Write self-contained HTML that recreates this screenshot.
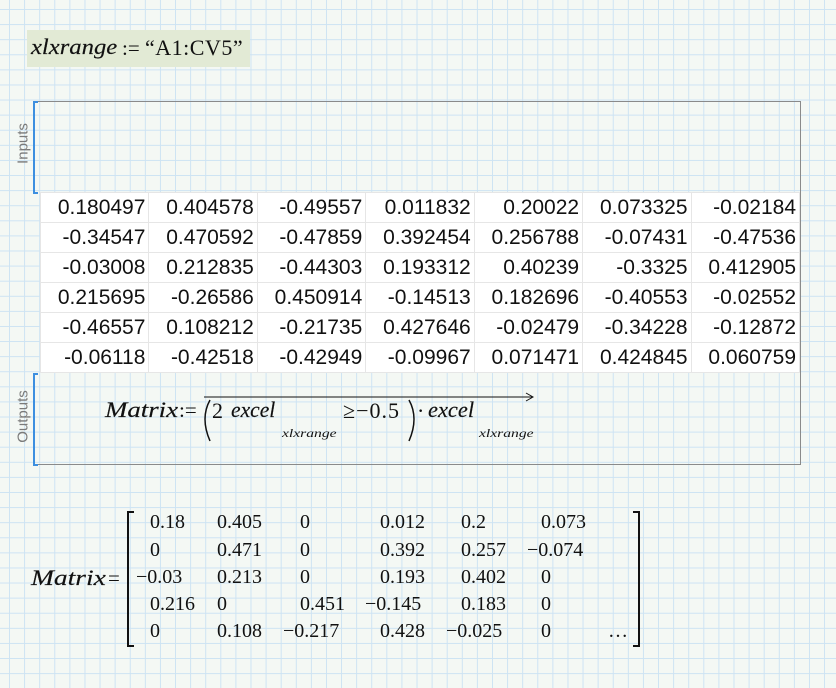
<!DOCTYPE html>
<html><head><meta charset="utf-8"><style>
html,body{margin:0;padding:0}
body{width:836px;height:688px;position:relative;overflow:hidden;background-color:#f4f8f4;
background-image:linear-gradient(to right,#cde3f3 1px,transparent 1px),linear-gradient(to bottom,#cde3f3 1px,transparent 1px);
background-size:15.1px 15.1px;background-position:9px 9px;font-family:"Liberation Serif",serif}
.a{position:absolute;white-space:nowrap}
.m{font-family:"Liberation Serif",serif;font-size:20px;color:#111}
.i{font-style:italic;font-size:22px;display:inline-block;transform-origin:left center;-webkit-text-stroke:0.15px #111}
table{position:absolute;left:40px;top:192px;width:760px;table-layout:fixed;border-collapse:collapse;background:#fff;font-family:"Liberation Sans",sans-serif;font-size:21px;color:#111}
td{height:29px;padding:0 3px 0 0;text-align:right;border:1px solid #e6e6e6;line-height:29px;overflow:hidden}
.lab{position:absolute;font-family:"Liberation Sans",sans-serif;font-size:15px;color:#7a7a7a;transform:rotate(-90deg);transform-origin:center}
.s{font-size:12px;font-style:italic;display:inline-block;transform:scaleX(1.3);transform-origin:left center}
</style></head><body>
<div class="a" style="left:27px;top:30px;width:223px;height:37px;background:#e2ead5"></div>
<div class="a m" style="left:31px;top:34px"><span class="i" style="transform:scaleX(1.12)">xlxrange</span></div>
<div class="a m" style="left:122px;top:36px;font-size:21px">:=</div>
<div class="a m" style="left:145px;top:35px;font-size:22px;letter-spacing:0.5px">“A1:CV5”</div>

<div class="a" style="left:36px;top:101px;width:764px;height:362px;border-top:1px solid #8a8a8a;border-right:1px solid #8a8a8a;border-bottom:1px solid #8a8a8a"></div>
<div class="a" style="left:33px;top:101px;width:3px;height:89px;border:2px solid #3d8fe0;border-right:none"></div>
<div class="a" style="left:33px;top:373px;width:3px;height:89px;border:2px solid #3d8fe0;border-right:none"></div>
<div class="lab" style="left:-2px;top:135px;width:50px;text-align:center">Inputs</div>
<div class="lab" style="left:-7px;top:408px;width:60px;text-align:center">Outputs</div>

<table>
<tr><td>0.180497</td><td>0.404578</td><td>-0.49557</td><td>0.011832</td><td>0.20022</td><td>0.073325</td><td>-0.02184</td></tr>
<tr><td>-0.34547</td><td>0.470592</td><td>-0.47859</td><td>0.392454</td><td>0.256788</td><td>-0.07431</td><td>-0.47536</td></tr>
<tr><td>-0.03008</td><td>0.212835</td><td>-0.44303</td><td>0.193312</td><td>0.40239</td><td>-0.3325</td><td>0.412905</td></tr>
<tr><td>0.215695</td><td>-0.26586</td><td>0.450914</td><td>-0.14513</td><td>0.182696</td><td>-0.40553</td><td>-0.02552</td></tr>
<tr><td>-0.46557</td><td>0.108212</td><td>-0.21735</td><td>0.427646</td><td>-0.02479</td><td>-0.34228</td><td>-0.12872</td></tr>
<tr><td>-0.06118</td><td>-0.42518</td><td>-0.42949</td><td>-0.09967</td><td>0.071471</td><td>0.424845</td><td>0.060759</td></tr>
</table>

<div class="a m" style="left:105px;top:397px"><span class="i" style="transform:scaleX(1.22)">Matrix</span></div>
<div class="a m" style="left:179px;top:398px;font-size:21px">:=</div>
<svg class="a" style="left:195px;top:388px" width="345" height="58">
<line x1="9" y1="9" x2="337" y2="9" stroke="#111" stroke-width="1"/>
<path d="M331 5 L338 9 L331 13" fill="none" stroke="#111" stroke-width="1"/>
<path d="M15 12 Q5 30 15 53" fill="none" stroke="#111" stroke-width="1.5"/>
<path d="M214 12 Q224 30 214 53" fill="none" stroke="#111" stroke-width="1.5"/>
</svg>
<div class="a m" style="left:212px;top:398px;font-size:22px">2</div>
<div class="a m" style="left:231px;top:397px"><span class="i" style="transform:scaleX(0.98)">excel</span></div>
<div class="a m" style="left:282px;top:420px"><span class="s">xlxrange</span></div>
<div class="a m" style="left:343px;top:398px;font-size:22px;letter-spacing:1px">≥−0.5</div>
<div class="a m" style="left:417px;top:398px;font-size:22px">·</div>
<div class="a m" style="left:428px;top:397px"><span class="i" style="transform:scaleX(1.02)">excel</span></div>
<div class="a m" style="left:479px;top:420px"><span class="s">xlxrange</span></div>

<div class="a m" style="left:31px;top:565px"><span class="i" style="transform:scaleX(1.25)">Matrix</span></div>
<div class="a m" style="left:108px;top:566px;font-size:21px">=</div>
<svg class="a" style="left:120px;top:510px" width="530" height="140">
<path d="M14 2 L8 2 L8 136 L14 136" fill="none" stroke="#111" stroke-width="2"/>
<path d="M513 2 L519 2 L519 136 L513 136" fill="none" stroke="#111" stroke-width="2"/>
</svg>
<div class="a m" style="left:150px;top:511px">0.18</div>
<div class="a m" style="left:217px;top:511px">0.405</div>
<div class="a m" style="left:300px;top:511px">0</div>
<div class="a m" style="left:380px;top:511px">0.012</div>
<div class="a m" style="left:461px;top:511px">0.2</div>
<div class="a m" style="left:541px;top:511px">0.073</div>

<div class="a m" style="left:150px;top:539px">0</div>
<div class="a m" style="left:217px;top:539px">0.471</div>
<div class="a m" style="left:300px;top:539px">0</div>
<div class="a m" style="left:380px;top:539px">0.392</div>
<div class="a m" style="left:461px;top:539px">0.257</div>
<div class="a m" style="left:527px;top:539px">−0.074</div>

<div class="a m" style="left:136px;top:566px">−0.03</div>
<div class="a m" style="left:217px;top:566px">0.213</div>
<div class="a m" style="left:300px;top:566px">0</div>
<div class="a m" style="left:380px;top:566px">0.193</div>
<div class="a m" style="left:461px;top:566px">0.402</div>
<div class="a m" style="left:541px;top:566px">0</div>

<div class="a m" style="left:150px;top:593px">0.216</div>
<div class="a m" style="left:217px;top:593px">0</div>
<div class="a m" style="left:300px;top:593px">0.451</div>
<div class="a m" style="left:365px;top:593px">−0.145</div>
<div class="a m" style="left:461px;top:593px">0.183</div>
<div class="a m" style="left:541px;top:593px">0</div>

<div class="a m" style="left:150px;top:620px">0</div>
<div class="a m" style="left:217px;top:620px">0.108</div>
<div class="a m" style="left:283px;top:620px">−0.217</div>
<div class="a m" style="left:380px;top:620px">0.428</div>
<div class="a m" style="left:446px;top:620px">−0.025</div>
<div class="a m" style="left:541px;top:620px">0</div>
<div class="a m" style="left:608px;top:620px">…</div>
</body></html>
